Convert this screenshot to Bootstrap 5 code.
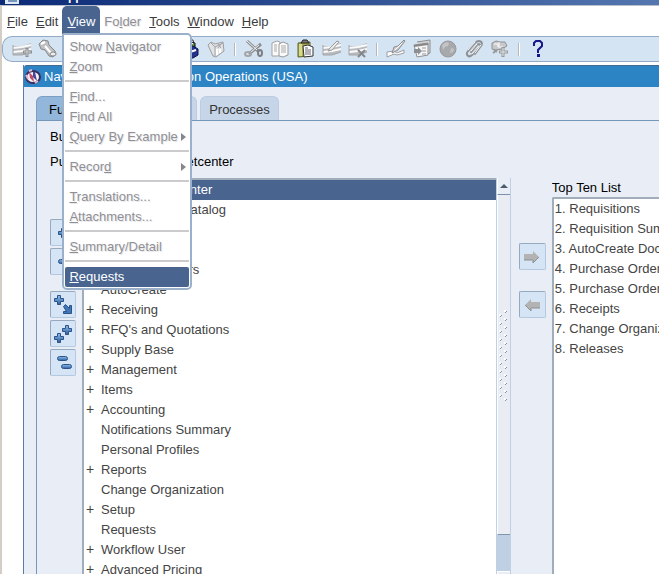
<!DOCTYPE html>
<html lang="en">
<head>
<meta charset="utf-8">
<meta name="viewport" content="width=device-width, initial-scale=1">
<title>Navigator</title>
<link rel="stylesheet" href="https://cdn.jsdelivr.net/npm/bootstrap@5.3.0/dist/css/bootstrap.min.css">
<style>
body{font:13px/20px "Liberation Sans",Arial,sans-serif;color:#000;background:#fff;white-space:nowrap}
button{font:inherit}
ul,ol{list-style:none}
.app-title{height:5px;background:linear-gradient(90deg,#0c2a78,#1f3f86 30%,#5577b0);font:bold 12px/18px "Liberation Sans",Arial,sans-serif;padding-left:5px}
.app-body{border-left:2px solid #d3cdc6;border-top:1px solid #b9c0cc}
.menus{height:30px;padding-left:1px}
.menu-top{padding:7px 4px 3px;height:28px;line-height:18px;border:0;background:none;color:#3c3c40;border-radius:5px 5px 0 0}
.menu-top.open{background:#48648f;color:#fff;padding:7px 5px 3px}
.menu-top:disabled,.drop button:disabled{color:#909094;text-shadow:1px 1px 0 #e8e8ec}
.drop{position:absolute;top:27px;left:0;z-index:10;width:130px;padding:2px 1px 1px;background:#fff;border:2px solid #9bb0cb;border-radius:2px 5px 5px 5px}
.drop button{display:flex;justify-content:space-between;align-items:center;width:100%;height:20px;padding:0 3px 0 4px;border:0;background:none}
.drop button.picked{background:#48648f;color:#fff;border-radius:2px}
.drop hr{margin:3px 0 5px;border-top:2px solid #cbcbce;opacity:1}
.tools{height:26px;background:#d4e4f3;border:1px solid #93abc5;border-right:0;border-radius:10px 0 0 10px;padding-left:6px}
.tool{width:26px;height:24px;padding:0;border:0;background:none;display:flex;align-items:center;justify-content:center}
.tool-gap{width:12px;height:13px;display:flex;justify-content:center}
.tool-gap::before{content:"";width:2px;background:#b5b7bb;border-right:1px solid #fff}
.win{margin:3px 0 0 21px;border-left:1px solid #5a7ba8;background:#e9eef6}
.win-title{height:22px;background:#2c84c5;border-top:1px solid #46698f;color:#fff;padding-left:1px;gap:2px;border-radius:3px 0 0 0}
.tabs{padding:9px 0 0 12px;gap:3px}
.tabs button{height:24px;border:1px solid #bccde2;border-bottom:0;background:#c6d5e8;border-radius:6px 6px 0 0;padding:2px 8px 0;color:#333}
.tabs button.near{padding:2px 6px 0}
.tabs button.on{background:#93b7da;border-color:#7f9fc2;padding:2px 8px 0 12px;color:#000}
.pane{margin-left:12px;border:solid #7597b9;border-width:1px 0 0 1px;padding:6px 0 0 13px}
.pane p{margin:0 0 5px}
.cols{display:grid;grid-template-columns:26px minmax(0,4fr) 29px minmax(0,1fr);column-gap:6px;margin-top:1px;grid-template-rows:minmax(0,1fr)}
.sq{width:26px;height:27px;padding:0;background:#d5e5f5;border:1px solid #97a9bf;border-right-color:#b4c9df;border-bottom-color:#b4c9df;border-radius:2px;display:flex;align-items:center;justify-content:center}
.sq.arrow{width:27px}
.stack1{padding-top:41px;gap:2px}
.stack1 .last-single{margin-bottom:14px}
.stack2{padding:65px 0 0 2px;gap:21px}
.box{background:#fff;border:solid #a2adbb;border-width:2px 0 0 2px;border-radius:2px 0 0 0;color:#444}
.tree li{padding-left:17px;height:20px}
.tree li.chosen{background:#48648f;color:#fff}
.tree .exp::before{content:"+";display:inline-block;width:15px;margin-left:-15px;font-size:14px;line-height:16px}
.top-label{line-height:19px}
.bar{width:15px;border:solid #bfd0e5;border-width:0 1px;background:#bfd0e5}
.bar button{border:0;border-left:1px solid #fff;background:#e9eef6;height:16px;padding:0;line-height:0;flex-shrink:0}
.bar .down{margin-top:36px;border-top:1px solid #fff}
.thumb{height:341px;padding-bottom:18px;flex-shrink:0;background:#e9edf3;border-left:1px solid #fff;border-top:1px solid #7f8fae;border-bottom:1px solid #8394ae;display:flex;align-items:center;justify-content:center}
.top10 li{padding-left:1px}
</style>
<script src="https://cdn.jsdelivr.net/npm/bootstrap@5.3.0/dist/js/bootstrap.bundle.min.js"></script>
</head>
<body class="vh-100 d-flex flex-column overflow-hidden">
<svg width="0" height="0" class="position-absolute" aria-hidden="true">
  <defs>
    <linearGradient id="blu" x1="0" y1="0" x2="0" y2="1"><stop offset="0" stop-color="#8fc0ee"/><stop offset="1" stop-color="#2d5f9f"/></linearGradient>
    <g id="plus"><path d="M3 0h3v3h3v3h-3v3h-3v-3h-3v-3h3z" fill="url(#blu)" stroke="#2c5289" stroke-width="1"/></g>
    <g id="sheet"><path d="M1 7l9 0 9-3v9l-8 3-10 0z" fill="#b9babd"/><path d="M1 9l9-1 9-2M1 13l9-1 9-2" stroke="#fbfbfb" stroke-width="2" fill="none"/><path d="M1 6v10h9l9-3" stroke="#a4a6a9" fill="none"/></g>
  </defs>
</svg>
<header class="app-title d-flex align-items-end overflow-hidden text-white flex-shrink-0">
  <svg width="14" height="16" viewBox="0 0 14 16"><path d="M0 0h14v15H0z" fill="#dce8f4"/><path d="M3 11h9v2H3z" fill="#7697ba"/></svg>
  <span>Oracle Applications</span>
</header>
<div class="app-body flex-grow-1 d-flex flex-column overflow-hidden">
  <nav class="menus d-flex align-items-start flex-shrink-0">
    <button class="menu-top"><u>F</u>ile</button>
    <button class="menu-top"><u>E</u>dit</button>
    <div class="position-relative">
      <button class="menu-top open" aria-expanded="true"><u>V</u>iew</button>
      <div class="drop" role="menu">
        <button disabled><span>Show <u>N</u>avigator</span></button>
        <button disabled><span><u>Z</u>oom</span></button>
        <hr>
        <button disabled><span><u>F</u>ind...</span></button>
        <button disabled><span>F<u>i</u>nd All</span></button>
        <button disabled><span><u>Q</u>uery By Example</span><svg width="5" height="8"><path d="M0 0l5 4-5 4z" fill="#86868c"/></svg></button>
        <hr>
        <button disabled><span>Recor<u>d</u></span><svg width="5" height="8"><path d="M0 0l5 4-5 4z" fill="#86868c"/></svg></button>
        <hr>
        <button disabled><span><u>T</u>ranslations...</span></button>
        <button disabled><span><u>A</u>ttachments...</span></button>
        <hr>
        <button disabled><span><u>S</u>ummary/Detail</span></button>
        <hr>
        <button class="picked"><span><u>R</u>equests</span></button>
      </div>
    </div>
    <button class="menu-top" disabled>Fo<u>l</u>der</button>
    <button class="menu-top"><u>T</u>ools</button>
    <button class="menu-top"><u>W</u>indow</button>
    <button class="menu-top"><u>H</u>elp</button>
  </nav>
  <div class="tools d-flex align-items-center flex-shrink-0" role="toolbar" aria-label="Toolbar">
    <button class="tool" aria-label="New"><svg width="20" height="20" viewBox="0 0 20 20"><use href="#sheet"/><path d="M15 9v9M11 13h9" stroke="#8b8d91" stroke-width="3"/><path d="M15 10v7M12 13h7" stroke="#d0d0d2"/></svg></button>
    <button class="tool" aria-label="Find"><svg width="20" height="20" viewBox="0 0 20 20"><path d="M1 5l4-4 5 1 1 4 6 6 1 3-3 3-4-1-4-6-4-1z" fill="#bfc0c2" stroke="#86888c"/><path d="M3 5l4-2M7 7l6 7" stroke="#fff" stroke-width="2"/><ellipse cx="15" cy="15" rx="3" ry="2" fill="#eee" stroke="#888"/></svg></button>
    <button class="tool" aria-label="Show Navigator"><svg width="18" height="18"><circle cx="9" cy="9" r="7" fill="#ddd" stroke="#999"/></svg></button>
    <span class="tool-gap"></span>
    <button class="tool" aria-label="Save"><svg width="18" height="18"><path d="M2 2h14v14H2z" fill="#ccc"/></svg></button>
    <button class="tool" aria-label="Next Step"><svg width="18" height="18"><path d="M2 9h14" stroke="#999"/></svg></button>
    <button class="tool" aria-label="Switch Responsibility"><svg width="18" height="18"><circle cx="9" cy="6" r="4" fill="#ccc"/></svg></button>
    <button class="tool" aria-label="Print"><svg width="20" height="20" viewBox="0 0 20 20"><path d="M5 1h8l2 8H5z" fill="#fff" stroke="#333"/><path d="M11 3l4 1v7" fill="none" stroke="#111"/><path d="M13 5v4" stroke="#5da43a" stroke-width="2"/><path d="M2 9l11-2 5 3v6l-5 3H2z" fill="#25328a" stroke="#0d1448"/><path d="M7 14l9-3" stroke="#fff" stroke-width="2"/></svg></button>
    <button class="tool" aria-label="Close Form"><svg width="20" height="20" viewBox="0 0 20 20"><path d="M2 6l3-3 4 2 8-2 1 9-8 6-3-1z" fill="#e2e3e5" stroke="#9b9da1"/><path d="M5 4l4 4v9M9 8l8-4M12 5l3 4M15 5l-3 4" stroke="#a0a2a6" fill="none"/><path d="M11 10v6M14 10v4" stroke="#fff" stroke-width="2"/></svg></button>
    <span class="tool-gap"></span>
    <button class="tool" aria-label="Cut"><svg width="20" height="20" viewBox="0 0 20 20" fill="none"><path d="M3 2l12 11M17 5L5 15" stroke="#8b8d91" stroke-width="3"/><path d="M3 2l10 9M15 6L6 14" stroke="#f6f6f6"/><ellipse cx="4" cy="15" rx="3" ry="2" stroke="#a3a5a8" stroke-width="2"/><ellipse cx="16" cy="14" rx="2" ry="3" stroke="#7d7f83" stroke-width="2"/></svg></button>
    <button class="tool" aria-label="Copy"><svg width="20" height="20" viewBox="0 0 20 20"><path d="M2 4l5-2 3 1 1 13-3 1-6 0z" fill="#fafafa" stroke="#a1a3a6"/><path d="M9 5l4-2 5 2v11l-5 2-4-1z" fill="#fafafa" stroke="#999"/><path d="M4 6h3M4 8h3M4 10h3M4 12h3M11 7h5M11 9h5M11 11h5M11 13h5" stroke="#aaa"/></svg></button>
    <button class="tool" aria-label="Paste"><svg width="20" height="20" viewBox="0 0 20 20"><path d="M2 4l12-1v14l-12 1z" fill="#a9aa52" stroke="#62632a"/><path d="M3 5h3v12H3z" fill="#d6d98c"/><path d="M5 4l2-3h4l2 3z" fill="#777" stroke="#222"/><path d="M7 7l5-1 5 2v9l-9 1z" fill="#fff" stroke="#333"/><path d="M9 9h3M9 11h6M9 13h6M9 15h6" stroke="#667"/></svg></button>
    <button class="tool" aria-label="Clear Record"><svg width="20" height="20" viewBox="0 0 20 20"><use href="#sheet"/><path d="M17 3l-7 8-4 1 2-3 7-7z" fill="#ececec" stroke="#999"/></svg></button>
    <button class="tool" aria-label="Delete"><svg width="20" height="20" viewBox="0 0 20 20"><use href="#sheet"/><path d="M10 11l7 7M17 11l-7 7" stroke="#85878b" stroke-width="2"/></svg></button>
    <span class="tool-gap"></span>
    <button class="tool" aria-label="Edit Field"><svg width="20" height="20" viewBox="0 0 20 20"><path d="M1 13l7-1 3 2 7-3v3l-7 2-3-1-7 3z" fill="#fff" stroke="#9c9ea2"/><path d="M18 1l1 1-7 9-6 3 2-6 4-1z" fill="#cfcfd1" stroke="#8c8e92"/><path d="M16 4l-7 7" stroke="#fff"/></svg></button>
    <button class="tool" aria-label="Zoom"><svg width="20" height="20" viewBox="0 0 20 20"><path d="M5 3l13-2v13l-3 1" fill="#d4d4d6" stroke="#8c8e92"/><path d="M2 6l14-2v12l-11 2z" fill="#f6f6f6" stroke="#8c8e92"/><path d="M2 7l14-2" stroke="#888" stroke-width="2"/><path d="M10 9h4M10 12h4M10 15h4" stroke="#999"/><path d="M2 10h4v-2l4 4-4 4v-2H2z" fill="#8d8f93"/></svg></button>
    <button class="tool" aria-label="Translations"><svg width="20" height="20" viewBox="0 0 20 20"><circle cx="10" cy="10" r="8" fill="#a8a9ab" stroke="#98999c"/><path d="M4 6l4-3 3 1-1 3-3 1-2 3zM13 9l3 1-1 3-3 1z" fill="#c3c4c6"/></svg></button>
    <button class="tool" aria-label="Attachments"><svg width="20" height="20" viewBox="0 0 20 20" fill="none" stroke-linecap="round"><path d="M7 13l6-7c2-2 4 0 2 2l-7 8c-3 3-7 0-4-4l7-8c4-4 9-1 6 3l-6 8" stroke="#8f9195" stroke-width="2"/><path d="M7 12l6-7M15 7l-7 8M4 11l7-8M17 6l-6 8" stroke="#f8f8f8"/></svg></button>
    <button class="tool" aria-label="Folder Tools"><svg width="20" height="20" viewBox="0 0 20 20"><path d="M2 4l4-2 4 1 5 0 2 4-5 3-6 1-4-1z" fill="#c7c8ca" stroke="#8f9195"/><path d="M4 5h4v3h5M9 3v4" stroke="#fff" fill="none"/><path d="M13 8v10M9 13h9" stroke="#96989c" stroke-width="3"/><path d="M13 9v8M10 13h7" stroke="#e4e4e4"/><path d="M3 14l4-3M4 11l3 2" stroke="#999" stroke-width="2"/></svg></button>
    <span class="tool-gap"></span>
    <button class="tool" aria-label="Help"><svg width="20" height="20" viewBox="0 0 20 20" fill="none"><path d="M6 7V4l2-2h4l2 2v3l-4 4v3" stroke="#17178c" stroke-width="2"/><path d="M9 15h3v3H9z" fill="#17178c"/></svg></button>
  </div>
  <main class="win flex-grow-1 d-flex flex-column overflow-hidden">
    <div class="win-title d-flex align-items-center flex-shrink-0">
      <svg width="17" height="16" viewBox="0 0 17 16"><ellipse cx="8" cy="8" rx="7" ry="6" fill="#f2f2f8" stroke="#3c2c60" stroke-width="2"/><path d="M1 6l2 4M4 2l3-1M13 12l-3 2" stroke="#d9b7cc" stroke-width="2"/><path d="M4 3l4 4 1 6-4-4z" fill="#c04a68"/><path d="M8 3h2l2 9-4-4z" fill="#474a98"/></svg>
      <span>Navigator - Vendors, Vision Operations (USA)</span>
    </div>
    <div class="tabs d-flex flex-shrink-0" role="tablist">
      <button class="on" role="tab" aria-selected="true">Functions</button>
      <button class="near" role="tab">Documents</button>
      <button role="tab">Processes</button>
    </div>
    <div class="pane flex-grow-1 d-flex flex-column overflow-hidden">
      <p>Business Unit</p>
      <p>Purchasing: Open Marketcenter</p>
      <div class="cols flex-grow-1">
        <div class="stack1 d-flex flex-column">
          <button class="sq" aria-label="Expand"><svg width="10" height="10" viewBox="-.5 -.5 10 10"><use href="#plus"/></svg></button>
          <button class="sq last-single" aria-label="Collapse"><svg width="10" height="5"><rect x=".5" y=".5" width="9" height="4" rx="2" fill="url(#blu)" stroke="#2c5289"/></svg></button>
          <button class="sq" aria-label="Expand Branch"><svg width="20" height="20" viewBox="-.5 -.5 20 20"><use href="#plus" x="1" y="0"/><path d="M10 11l2-2 4 4V10h2v8h-8v-2h3z" fill="#4077b8" stroke="#2c5289"/></svg></button>
          <button class="sq" aria-label="Expand All"><svg width="20" height="20" viewBox="-.5 -.5 20 20"><use href="#plus" x="9" y="1"/><use href="#plus" x="1" y="9"/></svg></button>
          <button class="sq" aria-label="Collapse All"><svg width="20" height="20" viewBox="0 0 20 20" fill="url(#blu)" stroke="#2c5289"><rect x="4.500" y="3.500" width="10" height="4" rx="2"/><rect x="8.500" y="11.500" width="10" height="4" rx="2"/></svg></button>
        </div>
        <div class="d-flex">
          <ul class="box tree flex-grow-1 m-0 p-0 overflow-hidden">
            <li class="chosen">Open Marketcenter</li>
            <li>Supplier Item Catalog</li>
            <li>Requisitions</li>
            <li>Suppliers</li>
            <li class="exp">Purchase Orders</li>
            <li>AutoCreate</li>
            <li class="exp">Receiving</li>
            <li class="exp">RFQ's and Quotations</li>
            <li class="exp">Supply Base</li>
            <li class="exp">Management</li>
            <li class="exp">Items</li>
            <li class="exp">Accounting</li>
            <li>Notifications Summary</li>
            <li>Personal Profiles</li>
            <li class="exp">Reports</li>
            <li>Change Organization</li>
            <li class="exp">Setup</li>
            <li>Requests</li>
            <li class="exp">Workflow User</li>
            <li class="exp">Advanced Pricing</li>
          </ul>
          <div class="bar d-flex flex-column flex-shrink-0">
            <button aria-label="Scroll up"><svg width="8" height="4"><path d="M0 4l4-4 4 4z" fill="#4d5a6e"/></svg></button>
            <div class="thumb"><svg width="11" height="92"><defs><pattern id="grip" width="11" height="8" patternUnits="userSpaceOnUse"><path d="M1 4h2v2H1zM6 0h2v2H6z" fill="#fff"/><path d="M2 7l2-2M7 3l2-2" stroke="#7f93ae"/></pattern></defs><path d="M0 0h11v92H0z" fill="url(#grip)"/></svg></div>
            <button class="down" aria-label="Scroll down"><svg width="8" height="4"><path d="M0 0l4 4 4-4z" fill="#4d5a6e"/></svg></button>
          </div>
        </div>
        <div class="stack2 d-flex flex-column">
          <button class="sq arrow" aria-label="Add to list"><svg width="16" height="14"><path d="M0 4h9V1l6 6-6 6v-3H0z" fill="#b3b3b3"/><path d="M0 10h9v3l6-6" fill="none" stroke="#8d8f92"/></svg></button>
          <button class="sq arrow" aria-label="Remove from list"><svg width="16" height="14"><path d="M16 4H7V1L1 7l6 6v-3h9z" fill="#b3b3b3"/><path d="M16 10H7v3L1 7" fill="none" stroke="#8d8f92"/></svg></button>
        </div>
        <div class="d-flex flex-column overflow-hidden">
          <span class="top-label">Top Ten List</span>
          <ol class="box top10 flex-grow-1 m-0 p-0 overflow-hidden">
            <li>1. Requisitions</li>
            <li>2. Requisition Summary</li>
            <li>3. AutoCreate Documents</li>
            <li>4. Purchase Orders</li>
            <li>5. Purchase Order Summary</li>
            <li>6. Receipts</li>
            <li>7. Change Organization</li>
            <li>8. Releases</li>
          </ol>
        </div>
      </div>
    </div>
  </main>
</div>
</body>
</html>
